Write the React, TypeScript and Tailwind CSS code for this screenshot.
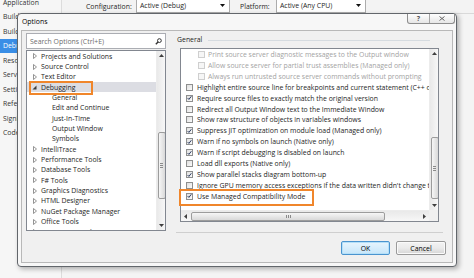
import React from "react";

const side = [
  "Application",
  "Build",
  "Build Events",
  "Debug",
  "Resources",
  "Services",
  "Settings",
  "Reference Paths",
  "Signing",
  "Code Analysis",
];

type TreeItem = { t: string; k: "c" | "e" | "ch"; sel?: boolean };
const tree: TreeItem[] = [
  { t: "Projects and Solutions", k: "c" },
  { t: "Source Control", k: "c" },
  { t: "Text Editor", k: "c" },
  { t: "Debugging", k: "e", sel: true },
  { t: "General", k: "ch" },
  { t: "Edit and Continue", k: "ch" },
  { t: "Just-In-Time", k: "ch" },
  { t: "Output Window", k: "ch" },
  { t: "Symbols", k: "ch" },
  { t: "IntelliTrace", k: "c" },
  { t: "Performance Tools", k: "c" },
  { t: "Database Tools", k: "c" },
  { t: "F# Tools", k: "c" },
  { t: "Graphics Diagnostics", k: "c" },
  { t: "HTML Designer", k: "c" },
  { t: "NuGet Package Manager", k: "c" },
  { t: "Office Tools", k: "c" },
  { t: "SQL Server Tools", k: "c" },
];

type Opt = { t: string; sub?: boolean; dis?: boolean; c?: boolean };
const opts: Opt[] = [
  { t: "Print source server diagnostic messages to the Output window", sub: true, dis: true },
  { t: "Allow source server for partial trust assemblies (Managed only)", sub: true, dis: true },
  { t: "Always run untrusted source server commands without prompting", sub: true, dis: true },
  { t: "Highlight entire source line for breakpoints and current statement (C++ only)" },
  { t: "Require source files to exactly match the original version", c: true },
  { t: "Redirect all Output Window text to the Immediate Window" },
  { t: "Show raw structure of objects in variables windows" },
  { t: "Suppress JIT optimization on module load (Managed only)", c: true },
  { t: "Warn if no symbols on launch (Native only)", c: true },
  { t: "Warn if script debugging is disabled on launch", c: true },
  { t: "Load dll exports (Native only)" },
  { t: "Show parallel stacks diagram bottom-up", c: true },
  { t: "Ignore GPU memory access exceptions if the data written didn't change the value" },
  { t: "Use Managed Compatibility Mode", c: true },
];

function Tri({ dir }: { dir: "up" | "down" | "left" | "right" }) {
  const d =
    dir === "up"
      ? "M0 3 L2.5 0 L5 3Z"
      : dir === "down"
      ? "M0 0 L5 0 L2.5 3Z"
      : dir === "left"
      ? "M3 0 L3 5 L0 2.5Z"
      : "M0 0 L3 2.5 L0 5Z";
  const w = dir === "up" || dir === "down" ? 5 : 3;
  const h = dir === "up" || dir === "down" ? 3 : 5;
  return (
    <svg width={w} height={h} viewBox={`0 0 ${w} ${h}`}>
      <path d={d} fill="#3f3f3f" />
    </svg>
  );
}

function VScroll({ thumbTop, thumbH }: { thumbTop: number; thumbH: number }) {
  return (
    <div className="w-[9px] h-full flex flex-col bg-gradient-to-r from-[#e9e9e9] to-[#f7f7f7] border-l border-[#ececec]">
      <div className="h-[9px] flex items-center justify-center">
        <Tri dir="up" />
      </div>
      <div className="flex-1 flex flex-col">
        <div
          className="w-[8px] ml-[0.5px] rounded-[2px] border border-[#9c9c9c] bg-gradient-to-r from-[#f6f6f6] to-[#d9d9d9] flex flex-col items-center justify-center gap-[1px]"
          style={{ marginTop: thumbTop, height: thumbH }}
        >
          <div className="w-[3px] h-px bg-[#8a8a8a]" />
          <div className="w-[3px] h-px bg-[#8a8a8a]" />
          <div className="w-[3px] h-px bg-[#8a8a8a]" />
        </div>
      </div>
      <div className="h-[9px] flex items-center justify-center">
        <Tri dir="down" />
      </div>
    </div>
  );
}

function Check({ checked, dis }: { checked?: boolean; dis?: boolean }) {
  return (
    <span
      className={
        "w-[7px] h-[7px] shrink-0 flex items-center justify-center border " +
        (dis
          ? "border-[#cfcfcf] bg-[#f6f6f6]"
          : "border-[#8e8f8f] bg-gradient-to-br from-[#dedede] to-[#fbfbfb]")
      }
    >
      {checked && (
        <svg width="6" height="6" viewBox="0 0 6 6">
          <path d="M0.8 3.1 L2.3 4.7 L5.2 0.9" fill="none" stroke="#26375e" strokeWidth="1.2" />
        </svg>
      )}
    </span>
  );
}

function Dropdown({ text, w }: { text: string; w: string }) {
  return (
    <div className={"h-[14px] mt-[-2px] border border-[#acacac] bg-white flex items-center pl-[3px] pr-[4px] " + w}>
      <span className="flex-1">{text}</span>
      <svg width="5" height="3" viewBox="0 0 5 3">
        <path d="M0 0 L5 0 L2.5 3Z" fill="#111" />
      </svg>
    </div>
  );
}

export default function App() {
  return (
    <div className="relative w-[474px] h-[278px] overflow-hidden bg-[#f1f1f1] font-['Open_Sans','Noto_Sans',sans-serif] text-[6.9px] leading-[9px] text-[#1e1e1e]">
      {/* background project page */}
      <div className="flex h-full">
        <div className="w-[62px] h-full bg-[#f6f6f6] border-r border-[#dcdcdc] flex flex-col">
          <div className="flex flex-col mt-[-5px]">
            {side.map((s) => (
              <div
                key={s}
                className={
                  "h-[14.5px] flex items-center pl-[3px] whitespace-nowrap " +
                  (s === "Debug" ? "bg-[#3a8ee6] text-white" : "text-[#333]")
                }
              >
                {s}
              </div>
            ))}
          </div>
        </div>
        <div className="flex-1 flex flex-col bg-[#f4f4f4]">
          <div className="h-[14px] flex items-center border-b border-[#d9d9d9] bg-[#f3f3f3]">
            <span className="ml-[24px] w-[50px]">Configuration:</span>
            <Dropdown text="Active (Debug)" w="w-[94px]" />
            <span className="ml-[10px] w-[36px]">Platform:</span>
            <Dropdown text="Active (Any CPU)" w="w-[90px]" />
          </div>
        </div>
      </div>

      {/* Options dialog */}
      <div className="absolute left-[17px] top-[13px] w-[440px] h-[254px] rounded-[4px] border border-[#62666b] bg-[#f7f7f7] shadow-[2px_2px_5px_rgba(0,0,0,0.3)] flex flex-col">
        <div className="h-[16px] shrink-0 relative flex items-start">
          <span className="ml-[4px] mt-[3px] text-black">Options</span>
          <div className="absolute right-[1px] top-0 h-[10px] flex border border-t-0 border-[#8d8d8d] rounded-b-[3px] bg-gradient-to-b from-[#fefefe] to-[#e6e6e6]">
            <div className="w-[22px] flex items-center justify-center border-r border-[#a5a5a5] text-[7px] text-[#555] font-bold">
              ?
            </div>
            <div className="w-[24px] flex items-center justify-center">
              <svg width="6" height="5" viewBox="0 0 6 5">
                <path d="M0.5 0.5 L5.5 4.5 M5.5 0.5 L0.5 4.5" stroke="#666" strokeWidth="1" />
              </svg>
            </div>
          </div>
        </div>

        <div className="flex-1 ml-[3px] mr-[3px] mb-[3px] border border-[#b8b8b8] bg-[#f0f0f0] flex flex-col">
          <div className="flex pt-[2px] pl-[4px]">
            {/* left column */}
            <div className="w-[140px] flex flex-col">
              <div className="h-[16px] border border-[#abadb3] bg-white flex items-center pl-[3px] pr-[3px] text-[#6d6d6d]">
                <span className="flex-1">Search Options (Ctrl+E)</span>
                <svg width="7" height="7" viewBox="0 0 7 7">
                  <circle cx="4.4" cy="2.6" r="1.9" fill="none" stroke="#333" strokeWidth="1" />
                  <path d="M3.1 3.9 L0.8 6.2" stroke="#333" strokeWidth="1.4" />
                </svg>
              </div>
              <div className="mt-[1px] h-[181px] border border-[#828790] bg-white flex overflow-hidden">
                <div className="flex-1 relative overflow-hidden">
                  {tree.map((it) => (
                    <div
                      key={it.t}
                      className={
                        "h-[10.35px] flex items-center whitespace-nowrap " +
                        (it.sel ? "bg-[#dcdde3] " : "") +
                        (it.k === "ch" ? "pl-[25px]" : "")
                      }
                    >
                      {it.k === "c" && (
                        <span className="w-[14px] pl-[6px] flex items-center">
                          <svg width="4" height="6" viewBox="0 0 4 6">
                            <path d="M0.5 0.5 L3.5 3 L0.5 5.5 Z" fill="none" stroke="#7a7a7a" strokeWidth="0.8" />
                          </svg>
                        </span>
                      )}
                      {it.k === "e" && (
                        <span className="w-[14px] pl-[5px] flex items-center">
                          <svg width="5" height="5" viewBox="0 0 5 5">
                            <path d="M4.5 0.5 L4.5 4.5 L0.5 4.5 Z" fill="#3c3c3c" />
                          </svg>
                        </span>
                      )}
                      <span>{it.t}</span>
                    </div>
                  ))}
                  <div className="absolute left-[2px] top-[30px] w-[64px] h-[14px] border-2 border-[#f0862b]" />
                </div>
                <VScroll thumbTop={72} thumbH={67} />
              </div>
            </div>

            {/* right column */}
            <div className="ml-[10px] w-[267px] flex flex-col relative">
              <div className="h-[15px] flex items-start pt-[2px]">
                <span className="ml-[1px]">General</span>
                <div className="flex-1 ml-[6px] mr-[13px] mt-[5px] h-px bg-[#d5dbe0]" />
              </div>
              <div className="ml-[4px] w-[259px] h-[174px] border border-[#828790] bg-white grid grid-cols-[1fr_9px] grid-rows-[1fr_11px] overflow-hidden">
                <div className="overflow-hidden">
                  {opts.map((o) => (
                    <div
                      key={o.t}
                      className={
                        "h-[10.93px] flex items-center whitespace-nowrap " +
                        (o.sub ? "pl-[17px] gap-[3px] " : "pl-[5px] gap-[4px] ") +
                        (o.dis ? "text-[#a3a3a3]" : "")
                      }
                    >
                      <Check checked={o.c} dis={o.dis} />
                      <span>{o.t}</span>
                    </div>
                  ))}
                </div>
                <VScroll thumbTop={79} thumbH={62} />
                <div className="flex bg-gradient-to-b from-[#e9e9e9] to-[#f7f7f7] border-t border-[#ececec]">
                  <div className="w-[9px] flex items-center justify-center">
                    <Tri dir="left" />
                  </div>
                  <div className="flex-1 flex items-center">
                    <div className="ml-[1px] w-[194px] h-[9px] rounded-[2px] border border-[#9c9c9c] bg-gradient-to-b from-[#f6f6f6] to-[#d9d9d9] flex items-center justify-center gap-[1px]">
                      <div className="w-px h-[3px] bg-[#8a8a8a]" />
                      <div className="w-px h-[3px] bg-[#8a8a8a]" />
                      <div className="w-px h-[3px] bg-[#8a8a8a]" />
                    </div>
                  </div>
                  <div className="w-[9px] flex items-center justify-center">
                    <Tri dir="right" />
                  </div>
                </div>
                <div className="bg-[#f0f0f0]" />
              </div>
              <div className="mt-[10px] h-px bg-[#cfcfcf]" />
              <div className="absolute left-[3px] top-[156px] w-[135px] h-[17px] border-2 border-[#f0862b]" />
            </div>
          </div>

          <div className="flex justify-end gap-[6px] pr-[6px] mt-[8px]">
            <button className="w-[49px] h-[14px] rounded-[2px] border border-[#4a94cf] bg-gradient-to-b from-[#e8f5fd] to-[#c6e6fa] shadow-[inset_0_0_0_1px_#b5e0f8] flex items-center justify-center text-black">
              OK
            </button>
            <button className="w-[50px] h-[14px] rounded-[2px] border border-[#9a9a9a] bg-gradient-to-b from-[#f3f3f3] via-[#eaeaea] to-[#d6d6d6] shadow-[inset_0_0_0_1px_#fafafa] flex items-center justify-center text-black">
              Cancel
            </button>
          </div>
        </div>
      </div>
    </div>
  );
}
